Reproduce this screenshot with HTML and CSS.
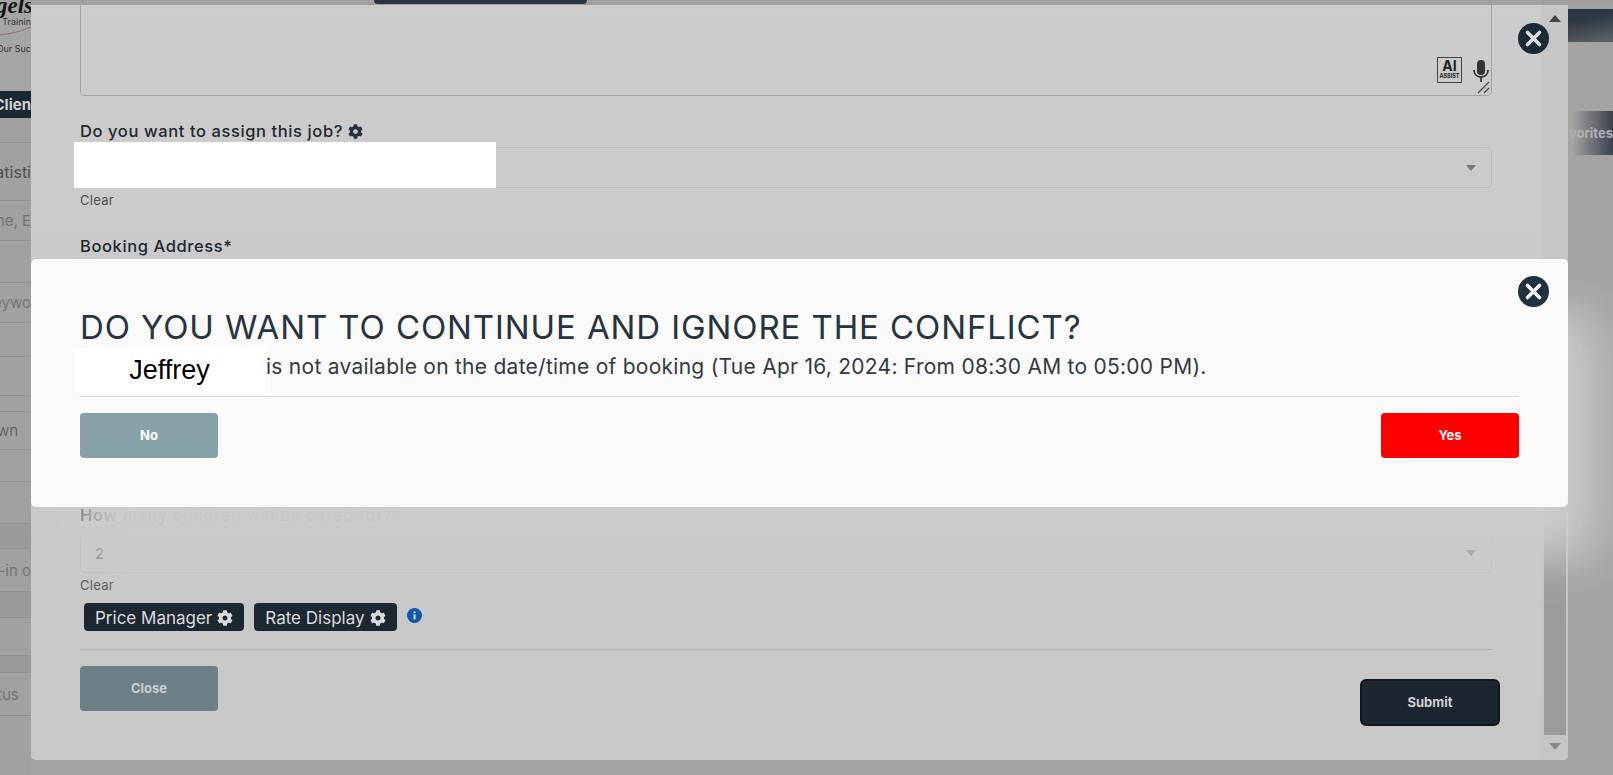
FILE: index.html
```html
<!DOCTYPE html>
<html lang="en">
<head>
<meta charset="utf-8">
<title>Booking</title>
<link rel="stylesheet" href="styles.css">
</head>
<body>
<svg class="defs" width="0" height="0" aria-hidden="true">
  <symbol id="cog" viewBox="0 0 512 512"><path d="M487.4 315.7l-42.6-24.6c4.3-23.2 4.3-47 0-70.2l42.6-24.6c4.9-2.8 7.1-8.6 5.5-14-11.1-35.6-30-67.8-54.7-94.6-3.8-4.1-10-5.1-14.8-2.3L380.8 110c-17.9-15.4-38.5-27.3-60.8-35.1V25.8c0-5.6-3.9-10.5-9.4-11.7-36.7-8.2-74.3-7.8-109.2 0-5.5 1.2-9.4 6.1-9.4 11.7V75c-22.2 7.9-42.8 19.8-60.8 35.1L88.7 85.5c-4.9-2.8-11-1.9-14.8 2.3-24.7 26.7-43.6 58.9-54.7 94.6-1.7 5.4.6 11.2 5.5 14L67.3 221c-4.3 23.2-4.3 47 0 70.2l-42.6 24.6c-4.9 2.8-7.1 8.6-5.5 14 11.1 35.6 30 67.8 54.7 94.6 3.8 4.1 10 5.1 14.8 2.3l42.6-24.6c17.9 15.4 38.5 27.3 60.8 35.1v49.2c0 5.6 3.9 10.5 9.4 11.7 36.7 8.2 74.3 7.8 109.2 0 5.5-1.2 9.4-6.1 9.4-11.7v-49.2c22.2-7.9 42.8-19.8 60.8-35.1l42.6 24.6c4.9 2.8 11 1.9 14.8-2.3 24.7-26.7 43.6-58.9 54.7-94.6 1.5-5.5-.7-11.3-5.6-14.1zM256 336c-44.1 0-80-35.9-80-80s35.9-80 80-80 80 35.9 80 80-35.9 80-80 80z"/></symbol>
  <symbol id="x" viewBox="0 0 31 31"><path d="M9.5 9.5l12 12M21.5 9.5l-12 12" fill="none" stroke="currentColor" stroke-width="3.6" stroke-linecap="round"/></symbol>
</svg>

<div class="behind">
  <div class="topline"><span class="toptab"></span></div>
  <div class="strip">
    <div class="row logo">
      <span class="logo-script">ngels</span>
      <span class="logo-small">s Trainin</span>
      <svg class="logo-curve" width="31" height="12" viewBox="0 0 31 12"><path d="M0 10C10 9 22 6 31 2" fill="none" stroke="#8d6f80" stroke-width="1"/></svg>
      <span class="logo-small logo-motto">Our Suc</span>
    </div>
    <div class="row dark">Clien</div>
    <div class="row"></div>
    <div class="row big">atisti</div>
    <div class="row soft">ne, E</div>
    <div class="row"></div>
    <div class="row soft">eywo</div>
    <div class="row"></div>
    <div class="row"></div>
    <div class="row"></div>
    <div class="row mid left">wn</div>
    <div class="row"></div>
    <div class="row"></div>
    <div class="row band"></div>
    <div class="row soft">-in o</div>
    <div class="row band"></div>
    <div class="row"></div>
    <div class="row band"></div>
    <div class="row soft left">tus</div>
    <div class="row end"></div>
  </div>
  <div class="rightside">
    <div class="r-head"></div>
    <div class="r-fav">vorites</div>
  </div>
</div>

<div class="modal">
  <div class="main">
    <div class="textarea">
      <div class="ai"><b>AI</b><small>ASSIST</small></div>
      <svg class="mic" width="20" height="24" viewBox="0 0 20 24"><rect x="6" y="0" width="8" height="15" rx="4" fill="#333"/><path d="M3 10c0 4.500 3 7 7 7s7-2.500 7-7M10 17v5" fill="none" stroke="#333" stroke-width="1.800"/></svg>
      <svg class="grip" width="13" height="13" viewBox="0 0 13 13"><path d="M1 12L12 1M7 12l5-5" stroke="#444" stroke-width="1.200" fill="none"/></svg>
    </div>

    <div class="label first">Do you want to assign this job? <svg class="cog dark-cog"><use href="#cog"/></svg></div>
    <div class="select-wrap">
      <div class="select"><span></span><i class="caret"></i></div>
      <div class="redact"></div>
    </div>
    <div class="clear">Clear</div>

    <div class="label booking">Booking Address*</div>
    <div class="hidden-fields"></div>

    <div class="label">How many children will be cared for?*</div>
    <div class="select lower"><span>2</span><i class="caret"></i></div>
    <div class="clear">Clear</div>

    <div class="tags">
      <span class="tag">Price Manager <svg class="cog"><use href="#cog"/></svg></span>
      <span class="tag">Rate Display <svg class="cog"><use href="#cog"/></svg></span>
      <svg class="info" width="15" height="15" viewBox="0 0 15 15"><circle cx="7.500" cy="7.500" r="7.500" fill="#0f57a8"/><rect x="6.600" y="6.400" width="1.900" height="5" fill="#e6e6e6"/><rect x="6.600" y="3.400" width="1.900" height="1.900" fill="#e6e6e6"/></svg>
    </div>
    <div class="rule"></div>
    <div class="foot">
      <button class="btn close-btn">Close</button>
      <button class="btn submit-btn">Submit</button>
    </div>
  </div>
  <div class="scrollbar">
    <i class="arrow-up"></i>
    <div class="track"><div class="thumb"></div></div>
    <i class="arrow-down"></i>
  </div>
  <button class="xbtn" aria-label="Close"><svg width="31" height="31"><use href="#x"/></svg></button>
</div>

<div class="glow"></div>

<div class="confirm">
  <h1>DO YOU WANT TO CONTINUE AND IGNORE THE CONFLICT?</h1>
  <div class="sub"><span class="name">Jeffrey</span><span class="sub-text">is not available on the date/time of booking (Tue Apr 16, 2024: From 08:30 AM to 05:00 PM).</span></div>
  <div class="rule2"></div>
  <div class="actions">
    <button class="btn no-btn">No</button>
    <button class="btn yes-btn">Yes</button>
  </div>
  <button class="xbtn" aria-label="Close"><svg width="31" height="31"><use href="#x"/></svg></button>
</div>
</body>
</html>
```

FILE: styles.css
```css
* { box-sizing: border-box; }
html, body { margin: 0; height: 775px; overflow: hidden; }
body { position: relative; width: 1613px; background: #a3a3a3; font-family: Inter, "Noto Sans", sans-serif; color: #1f2a33; }
.defs { position: absolute; }

/* page behind the dialogs */
.behind { position: absolute; inset: 0; }
.topline { height: 5px; background: #9f9f9f; padding-left: 374px; }
.toptab { display: block; width: 213px; height: 4px; background: #2b353e; border-radius: 0 0 5px 5px; }
.strip {
  position: absolute; left: 0; top: 0; width: 31px; height: 775px; overflow: hidden; background: #a0a1a1;
  display: grid;
  grid-template-rows: 91px 27px 25px 58px 40px 42px 40px 34px 39px 16px 38px 32px 42px 25px 43px 26px 38px 17px 43px 59px;
}
.row { border-bottom: 1px solid #8f9090; display: flex; align-items: center; justify-content: flex-end; white-space: nowrap; font-size: 15px; color: #6a6a6a; min-width: 0; overflow: hidden; }
.row.left { justify-content: flex-start; text-indent: -3px; }
.row.logo { display: block; position: relative; border: 0; background: #a5a5a5; }
.logo-script { position: absolute; right: -2px; top: -2px; font: italic 700 23px/16px "Liberation Serif", serif; color: #151515; }
.logo-small { position: absolute; right: 0; top: 16px; font-size: 9px; color: #333; }
.logo-motto { top: 43px; }
.logo-curve { position: absolute; left: 0; top: 25px; }
.row.dark { background: #1d2732; color: #d0d3d6; font-weight: 700; font-size: 15px; border: 0; }
.row.big { color: #4f4f4f; font-size: 16px; }
.row.soft { color: #747474; font-size: 15px; }
.row.mid { color: #585858; font-size: 15px; font-weight: 300; }
.row.band { background: #999a9a; }
.row.end { border: 0; }
.rightside { position: absolute; left: 1568px; top: 0; width: 45px; overflow: hidden; }
.r-head { margin-top: 9px; height: 33px; background: linear-gradient(170deg, #2c3843 30%, #5f6365); }
.r-fav { margin-top: 69px; height: 44px; background: linear-gradient(90deg, #a4a4a4 10%, #3d4650 95%); color: #b0b0b0; font-size: 13px; font-weight: 700; display: flex; align-items: center; justify-content: flex-end; white-space: nowrap; text-indent: 3px; overflow: hidden; }

/* main form dialog */
.modal {
  position: absolute; left: 31px; top: 5px; width: 1537px; height: 755px;
  display: flex; border-radius: 0 0 5px 5px; overflow: hidden;
  background: linear-gradient(#cccccc, #c8c8c8);
}
.main { width: 1510px; padding: 0 49px; flex: none; }
.textarea {
  height: 91px; width: 1412px; border: 1px solid #a3a3a3; border-top: 0; border-radius: 0 0 5px 5px;
  display: flex; justify-content: flex-end; align-items: flex-end;
}
.ai { width: 25px; height: 26px; border: 1.500px solid #444; display: flex; flex-direction: column; align-items: center; margin: 0 9px 12px 0; line-height: 1; color: #222; }
.ai b { font-size: 14px; margin-top: 1px; }
.ai small { font-size: 5.500px; font-weight: 700; margin-top: 1px; }
.mic { margin: 0 -14px 11px 0; }
.grip { margin: 0 1px 1px 0; }
.label { margin-top: 0; height: 20px; line-height: 20px; font-size: 16.500px; font-weight: 500; color: #20282f; letter-spacing: .6px; white-space: nowrap; }
.label.first { margin-top: 25px; }
.label.booking { margin-top: 29px; }
.cog { width: 15px; height: 15px; fill: currentColor; vertical-align: -2px; }
.dark-cog { color: #26313b; }
.select-wrap { position: relative; }
.select {
  margin-top: 6px; height: 41px; width: 1412px; border: 1px solid #bcbcbc; border-radius: 5px;
  display: flex; align-items: center; justify-content: space-between; padding: 0 15px 0 14px;
  font-size: 15px; color: #6b6b6b;
}
.select.lower { margin-top: 8px; height: 40px; }
.caret { width: 0; height: 0; border: 5.500px solid transparent; border-top: 6px solid #777; border-bottom: 0; }
.redact { position: absolute; left: -6px; top: -5px; width: 422px; height: 46px; background: #fff; }
.clear { margin-top: 5px; height: 14px; line-height: 14px; font-size: 13px; color: #505050; letter-spacing: .3px; }
.hidden-fields { height: 249px; }
.tags { margin-top: 11px; padding-left: 4px; display: flex; gap: 10px; align-items: flex-start; }
.tag {
  height: 28px; border-radius: 4px; background: #1c2732; color: #dcdcdc; display: inline-flex; align-items: center; gap: 5px; padding: 2px 11px 0;
  font-size: 17px; white-space: nowrap;
}
.tag .cog { width: 16px; height: 16px; }
.info { margin-top: 5px; }
.rule { margin-top: 18px; height: 1px; width: 1412px; background: #b3b3b3; }
.foot { margin: 16px -8px 0 0; display: flex; justify-content: space-between; align-items: flex-start; }
.btn { border: 0; border-radius: 4px; width: 138px; height: 45px; padding: 0 0 2px; font-family: inherit; font-size: 13px; font-weight: 700; display: block; }
.close-btn { background: #6d8087; color: #c9cfd1; }
.submit-btn { margin-top: 13px; width: 140px; height: 47px; background: #1c2630; border: 2px solid #10161c; border-radius: 6px; color: #d0d3d5; }

.scrollbar { flex: 1; background: #c6c6c6; display: flex; flex-direction: column; align-items: center; }
.arrow-up { margin-top: 10px; width: 0; height: 0; border: 6px solid transparent; border-bottom: 7px solid #444; border-top: 0; }
.track { flex: 1; width: 22px; display: flex; flex-direction: column; justify-content: flex-end; }
.thumb { height: 290px; margin-bottom: 1px; background: #9b9b9b; }
.arrow-down { margin: 7px 0 10px; width: 0; height: 0; border: 6px solid transparent; border-top: 7px solid #8b8b8b; border-bottom: 0; }

.xbtn { position: absolute; right: 19px; top: 18px; width: 31px; height: 31px; padding: 0; border: 0; border-radius: 50%; background: #1c2a38; color: #dcdcdc; }
.xbtn svg { display: block; }

/* glow thrown by the confirmation dialog */
.glow { position: absolute; left: 75px; top: 312px; width: 1522px; height: 248px; background: #cbcbcb; filter: blur(24px); }

/* confirmation dialog */
.confirm {
  position: absolute; left: 31px; top: 259px; width: 1537px; height: 248px; border-radius: 5px;
  background: #fafafa; padding: 46px 49px 0;
}
.confirm .xbtn { top: 17px; background: #223140; color: #fafafa; }
.confirm h1 { margin: 0; height: 44px; line-height: 44px; font-size: 33px; font-weight: 400; color: #263340; white-space: nowrap; letter-spacing: .9px; }
.sub { margin: -1px 0 0 -5px; height: 45px; display: flex; align-items: center; font-size: 21px; color: #333a40; white-space: nowrap; letter-spacing: .26px; }
.sub-text { margin-bottom: 8px; }
.name { width: 191px; height: 45px; padding-right: 2px; background: #fff; font: 27px/44px "Liberation Sans", sans-serif; color: #000; text-align: center; letter-spacing: 0; flex: none; }
.rule2 { margin-top: 3px; height: 1px; background: #dcdcdc; width: 1439px; }
.actions { margin-top: 16px; width: 1439px; display: flex; justify-content: space-between; }
.no-btn { background: #87a1a8; color: #fff; }
.yes-btn { background: #fe0000; color: #fff; }
```
